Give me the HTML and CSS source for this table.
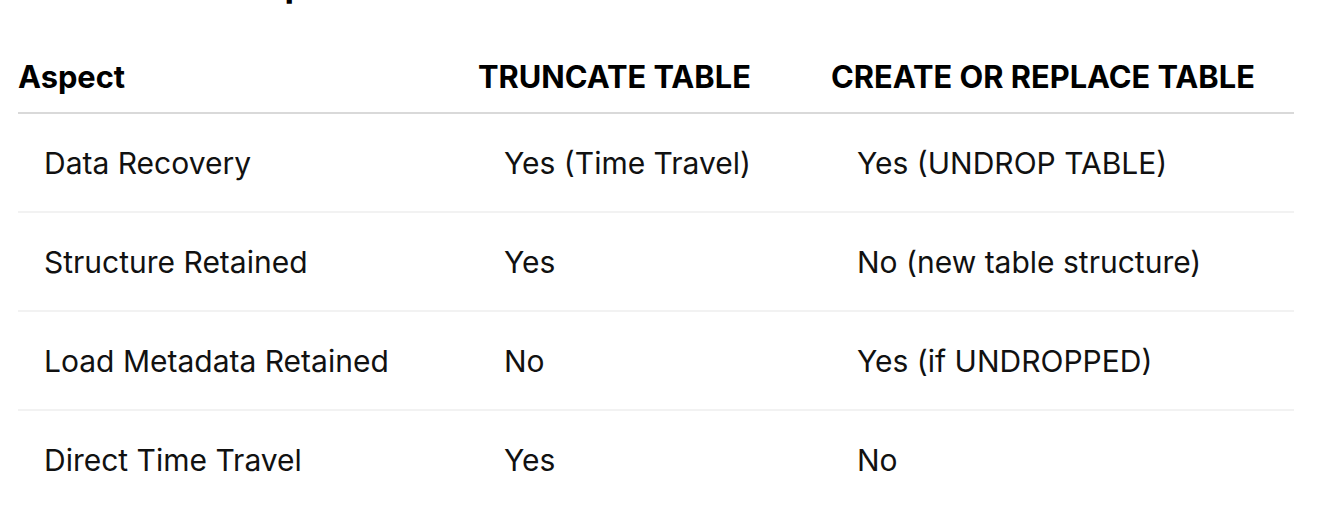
FILE: index.html
```html
<!DOCTYPE html>
<html lang="en">
<head>
<meta charset="utf-8">
<title>Comparison</title>
<link rel="stylesheet" href="styles.css">
</head>
<body>
<main class="page">
  <h2 class="title">Functional Comparison</h2>
  <table class="cmp">
    <colgroup>
      <col class="c1"><col class="c2"><col class="c3">
    </colgroup>
    <thead>
      <tr>
        <th>Aspect</th>
        <th>TRUNCATE TABLE</th>
        <th>CREATE OR REPLACE TABLE</th>
      </tr>
    </thead>
    <tbody>
      <tr><td>Data Recovery</td><td>Yes (Time Travel)</td><td>Yes (UNDROP TABLE)</td></tr>
      <tr><td>Structure Retained</td><td>Yes</td><td>No (new table structure)</td></tr>
      <tr><td>Load Metadata Retained</td><td>No</td><td>Yes (if UNDROPPED)</td></tr>
      <tr><td>Direct Time Travel</td><td>Yes</td><td>No</td></tr>
    </tbody>
  </table>
</main>
</body>
</html>
```
FILE: styles.css
```css
html, body {
  margin: 0;
  padding: 0;
  background: #ffffff;
}
body {
  font-family: Inter, "Noto Sans", "Liberation Sans", sans-serif;
  color: #111111;
  overflow: hidden;
}
.page {
  padding: 0 28px 0 18px;
}
.title {
  font-size: 35px;
  font-weight: 700;
  line-height: 40px;
  margin: -36px 0 0 0;
  height: 40px;
  color: #000000;
}
.cmp {
  width: 1276px;
  border-collapse: collapse;
  margin-top: 58px;
  table-layout: fixed;
}
.c1 { width: 460px; }
.c2 { width: 353px; }
.c3 { width: 463px; }
.cmp th {
  text-align: left;
  font-size: 30.8px;
  font-weight: 700;
  line-height: 30px;
  padding: 0 0 20px 0;
  border-bottom: 2px solid #d9d9d9;
  color: #000000;
  white-space: nowrap;
}
.cmp td {
  font-size: 30px;
  font-weight: 400;
  line-height: 30px;
  height: 97px;
  padding: 0 0 0 26px;
  border-bottom: 2px solid #f2f2f2;
  vertical-align: middle;
  color: #111111;
  white-space: nowrap;
}
.cmp tbody tr:last-child td {
  border-bottom: none;
}
```
